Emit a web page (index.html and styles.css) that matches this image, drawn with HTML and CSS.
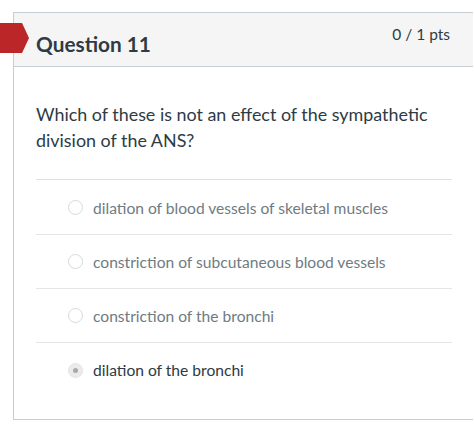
FILE: index.html
```html
<!DOCTYPE html>
<html>
<head>
<meta charset="utf-8">
<link rel="stylesheet" href="styles.css">
</head>
<body>
<div class="page">
  <div class="flag"></div>
  <div class="card">
    <div class="header">
      <h2 class="title">Question 11</h2>
      <div class="pts">0 / 1 pts</div>
    </div>
    <div class="body">
      <p class="question">Which of these is not an effect of the sympathetic division of the ANS?</p>
      <div class="answers">
        <div class="answer"><span class="radio"></span><span class="label">dilation of blood vessels of skeletal muscles</span></div>
        <div class="answer"><span class="radio"></span><span class="label">constriction of subcutaneous blood vessels</span></div>
        <div class="answer"><span class="radio"></span><span class="label">constriction of the bronchi</span></div>
        <div class="answer selected"><span class="radio"></span><span class="label">dilation of the bronchi</span></div>
      </div>
    </div>
  </div>
</div>
</body>
</html>
```

FILE: styles.css
```css
html, body {
  margin: 0;
  padding: 0;
  background: #ffffff;
}
body {
  font-family: Lato, "Open Sans", "Liberation Sans", sans-serif;
  color: #2d3b45;
}
.page {
  position: relative;
  padding: 12px 0 0 13px;
}
.flag {
  position: absolute;
  left: 0;
  top: 23px;
  width: 29px;
  height: 30px;
  background: #bb2629;
  clip-path: polygon(0 0, 76% 0, 100% 50%, 76% 100%, 0 100%);
}
.card {
  border: 1px solid #c7cdd1;
  border-right: none;
  width: 460px;
  box-sizing: border-box;
}
.header {
  background: #f5f5f5;
  border-bottom: 1px solid #c7cdd1;
  height: 54px;
  box-sizing: border-box;
  display: flex;
  justify-content: space-between;
  padding: 0 23px 0 22px;
}
.title {
  margin: 0;
  font-size: 20.8px;
  font-weight: 700;
  line-height: 1;
  padding-top: 21px;
}
.pts {
  font-size: 15.5px;
  padding-top: 14px;
  line-height: 1;
}
.body {
  padding: 0 21px 22px 22px;
}
.question {
  margin: 0;
  padding: 34px 0 26px;
  font-size: 17.9px;
  line-height: 26px;
  border-bottom: 1px solid #dfe2e4;
}
.answers {
  padding-top: 1px;
}
.answer {
  display: flex;
  align-items: center;
  height: 54px;
  box-sizing: border-box;
  padding-left: 32px;
  border-bottom: 1px solid #e3e6e8;
}
.answer:last-child {
  border-bottom: none;
}
.radio {
  width: 13px;
  height: 13px;
  border: 1px solid #d6dadd;
  border-radius: 50%;
  background: #fff;
  margin-right: 10px;
  flex: none;
  position: relative;
}
.label {
  font-size: 15.6px;
  color: #6f7b83;
}
.selected .label {
  color: #2d3b45;
}
.selected .radio {
  background: #ebebeb;
  border-color: #e4e4e4;
}
.selected .radio::after {
  content: "";
  position: absolute;
  left: 4px;
  top: 4px;
  width: 5px;
  height: 5px;
  border-radius: 50%;
  background: #a9a9a9;
}
```
